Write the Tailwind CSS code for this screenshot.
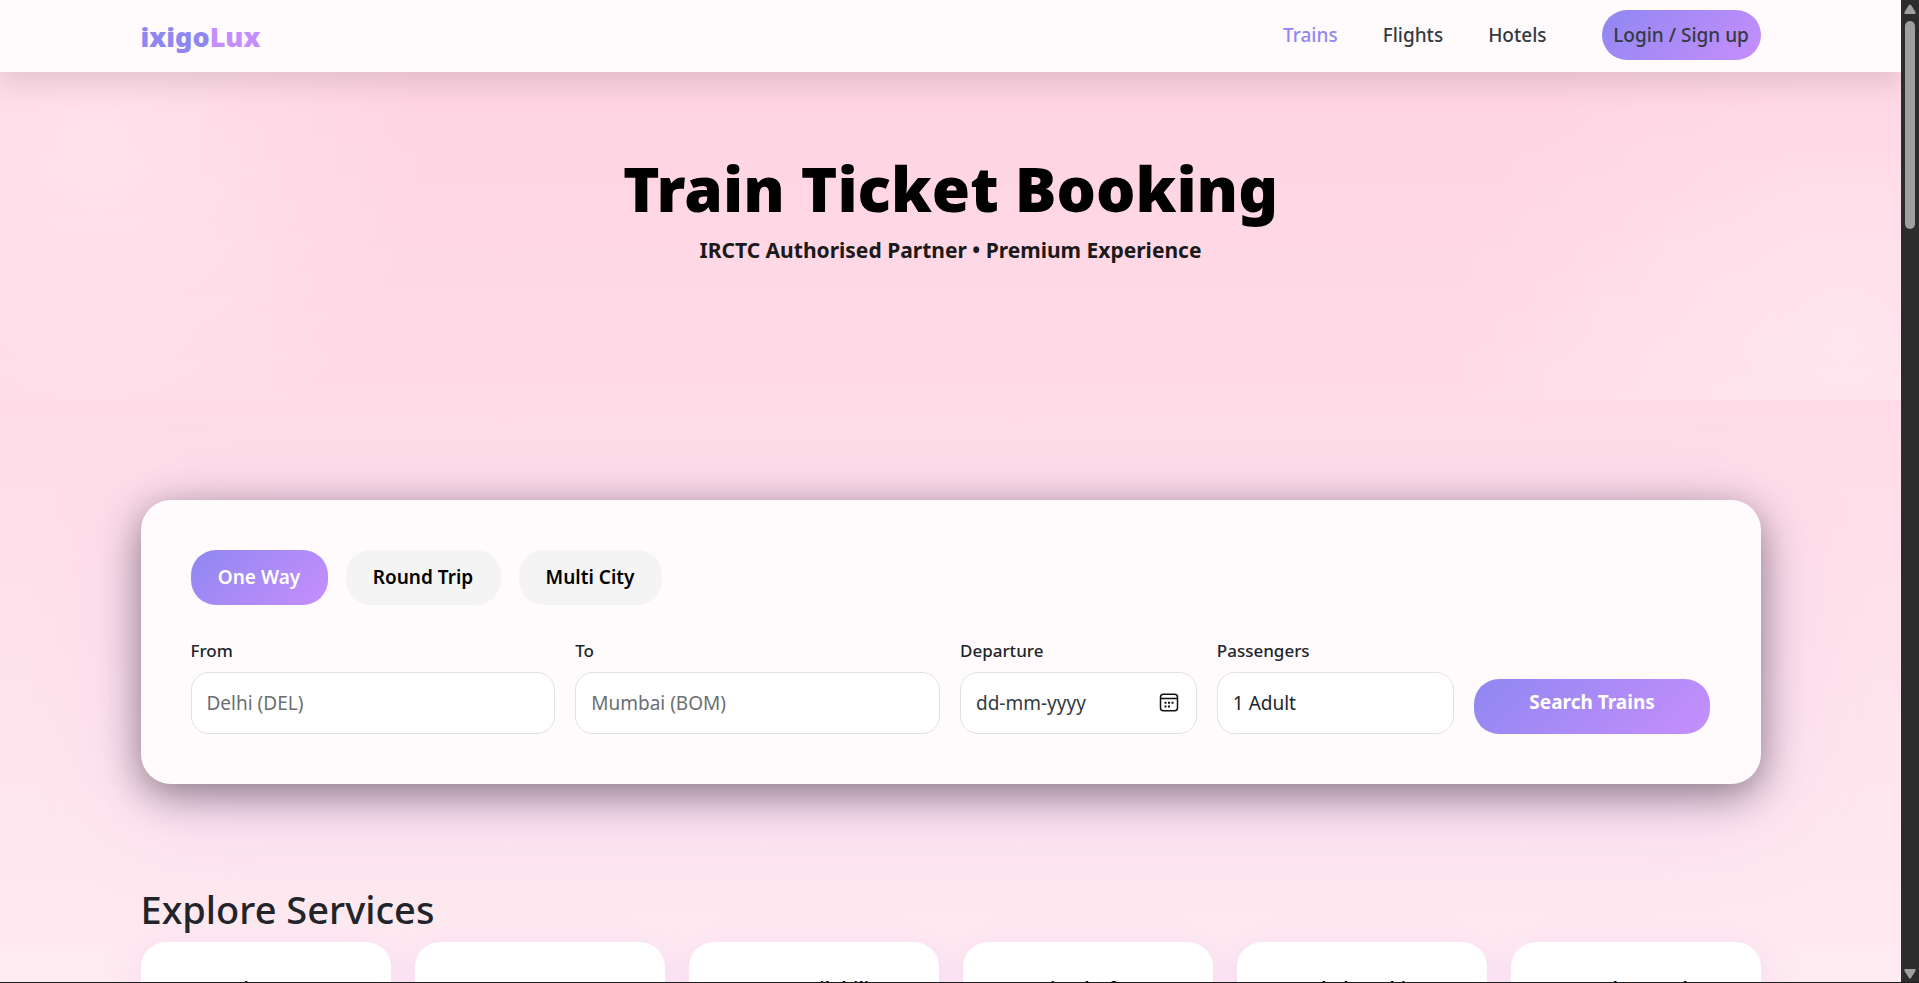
<!DOCTYPE html>
<html lang="en">
<head>
    <meta charset="UTF-8">
    <meta name="viewport" content="width=device-width, initial-scale=1.0">
    <title>ixigoLux - Train Ticket Booking</title>
    <script src="https://cdn.jsdelivr.net/npm/@tailwindcss/browser@4"></script>
</head>
<body class="relative h-screen overflow-hidden pr-[18px] font-['Noto_Sans','Open_Sans',sans-serif] text-[#212529] bg-[#2c2c2c]">

    <div class="h-full overflow-hidden bg-linear-to-b from-[#ffd1e1] to-[#feebf1]">

        <!-- Navbar -->
        <header class="relative z-10 h-[72px] bg-[#fffbfd] pb-0.5 shadow-[0_10px_30px_rgba(0,0,0,0.12)]">
            <div class="mx-auto flex h-full max-w-[1620px] items-center justify-between">
                <a href="#" class="pt-1 text-[27px] font-black text-[#8f87f1]">ixigo<span class="text-[#c68efd]">Lux</span></a>
                <nav class="flex items-center text-[19px] font-medium text-[#343a40]">
                    <a href="#" class="mr-[45px] text-[#8f87f1]">Trains</a>
                    <a href="#" class="mr-[45px]">Flights</a>
                    <a href="#" class="mr-[55px]">Hotels</a>
                    <a href="#" class="flex h-[50px] w-[159px] items-center justify-center whitespace-nowrap rounded-[25px] bg-linear-135 from-[#8f87f1] to-[#c68efd]">Login / Sign up</a>
                </nav>
            </div>
        </header>

        <!-- Hero -->
        <section class="h-[328px] bg-[radial-gradient(circle_at_5%_20%,rgba(255,255,255,0.3),transparent_340px),radial-gradient(circle_at_97%_83%,rgba(255,255,255,0.3),transparent_400px)] pt-[78px] text-center">
            <h1 class="text-[62px] leading-[76px] font-black text-black">Train Ticket Booking</h1>
            <p class="mt-2 text-[21px] leading-8 font-bold text-[#1a1a1a]">IRCTC Authorised Partner • Premium Experience</p>
        </section>

        <!-- Search card -->
        <main class="mx-auto mt-[100px] max-w-[1620px]">
            <form class="rounded-[30px] bg-[#fffbfd] p-[50px] shadow-[0_10px_40px_rgba(0,0,0,0.45),0_25px_100px_rgba(198,142,253,0.25)]">
                <div class="flex gap-[18px] text-[19px] font-semibold text-black">
                    <button type="button" class="h-[55px] w-[137px] rounded-[25px] bg-linear-135 from-[#8f87f1] to-[#c68efd] text-white">One Way</button>
                    <button type="button" class="h-[55px] w-[155px] rounded-[25px] bg-[#f4f4f4]">Round Trip</button>
                    <button type="button" class="h-[55px] w-[143px] rounded-[25px] bg-[#f4f4f4]">Multi City</button>
                </div>
                <div class="mt-8 grid grid-cols-[365fr_365fr_237fr_237fr_237fr] items-end gap-5">
                    <div>
                        <label for="from" class="block text-[17px] leading-7 font-medium">From</label>
                        <input id="from" type="text" placeholder="Delhi (DEL)" class="mt-[7px] block h-[62px] w-full rounded-[18px] border border-[#dee2e6] bg-white px-[15px] text-[19px] placeholder:text-[#6b6e71]">
                    </div>
                    <div>
                        <label for="to" class="block text-[17px] leading-7 font-medium">To</label>
                        <input id="to" type="text" placeholder="Mumbai (BOM)" class="mt-[7px] block h-[62px] w-full rounded-[18px] border border-[#dee2e6] bg-white px-[15px] text-[19px] placeholder:text-[#6b6e71]">
                    </div>
                    <div>
                        <label for="date" class="block text-[17px] leading-7 font-medium">Departure</label>
                        <div class="relative mt-[7px]">
                            <input id="date" type="text" placeholder="dd-mm-yyyy" class="block h-[62px] w-full rounded-[18px] border border-[#dee2e6] bg-white px-[15px] text-[19px] placeholder:text-[#343a40]">
                            <svg class="absolute top-[21px] right-[18px] h-[19px] w-5" viewBox="0 0 20 19" fill="none" stroke="#111" stroke-width="1.5">
                                <rect x="1.5" y="1.2" width="17" height="16.6" rx="3" />
                                <path d="M1.500 5.500h17" />
                                <path d="M5.500 9.700h2M9 9.700h2M12.500 9.700h2M5.500 13.500h2M9 13.500h2" stroke-width="2" />
                            </svg>
                        </div>
                    </div>
                    <div>
                        <label for="passengers" class="block text-[17px] leading-7 font-medium">Passengers</label>
                        <select id="passengers" class="mt-[7px] block h-[62px] w-full appearance-none rounded-[18px] border border-[#dee2e6] bg-white px-[15px] text-[19px]">
                            <option>1 Adult</option>
                            <option>2 Adults</option>
                        </select>
                    </div>
                    <button type="button" class="h-[55px] rounded-[25px] bg-linear-135 from-[#8f87f1] to-[#c68efd] pb-2 text-[19px] font-bold text-white">Search Trains</button>
                </div>
            </form>

            <!-- Services -->
            <h2 class="mt-[101px] text-[38px] leading-[48px] font-medium">Explore Services</h2>
            <div class="mt-[9px] grid grid-cols-6 gap-6 text-center text-[19px] leading-7 font-semibold text-black">
                <a href="#" class="rounded-[25px] bg-white px-4 pt-[33px] pb-10 shadow-[0_10px_40px_rgba(198,142,253,0.2)]">Running Status</a>
                <a href="#" class="rounded-[25px] bg-white px-4 pt-[33px] pb-10 shadow-[0_10px_40px_rgba(198,142,253,0.2)]">PNR Status</a>
                <a href="#" class="rounded-[25px] bg-white px-4 pt-[33px] pb-10 shadow-[0_10px_40px_rgba(198,142,253,0.2)]">Seat Availability</a>
                <a href="#" class="rounded-[25px] bg-white px-4 pt-[33px] pb-10 shadow-[0_10px_40px_rgba(198,142,253,0.2)]">Train Platform</a>
                <a href="#" class="rounded-[25px] bg-white px-4 pt-[33px] pb-10 shadow-[0_10px_40px_rgba(198,142,253,0.2)]">Tatkal Booking</a>
                <a href="#" class="rounded-[25px] bg-white px-4 pt-[33px] pb-10 shadow-[0_10px_40px_rgba(198,142,253,0.2)]">Order Food</a>
            </div>
        </main>
    </div>

    <!-- Scrollbar -->
    <div class="absolute inset-y-0 right-0 z-20 flex w-[18px] flex-col items-center bg-[#2c2c2c]">
        <svg class="mt-1 h-[10px] w-3 shrink-0" viewBox="0 0 12 10" fill="#9f9f9f"><path d="M5 1Q6 0 7 1L11.500 8Q12 10 11 10H1Q0 10 .5 8Z" /></svg>
        <div class="mt-[7px] h-[208px] w-[10px] rounded-full bg-[#9f9f9f]"></div>
        <svg class="mt-auto mb-1 h-[10px] w-3 shrink-0" viewBox="0 0 12 10" fill="#9f9f9f"><path d="M5 9Q6 10 7 9L11.500 2Q12 0 11 0H1Q0 0 .5 2Z" /></svg>
    </div>
    <div class="absolute inset-x-0 bottom-0 z-30 h-px bg-[#1c1c1c]"></div>
</body>
</html>
